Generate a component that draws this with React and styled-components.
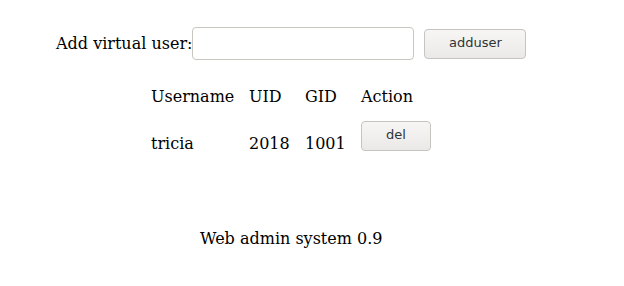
import React from "react";
import styled, { createGlobalStyle } from "styled-components";

const Global = createGlobalStyle`
  html, body { margin: 0; padding: 0; background: #fff; }
  body { font-family: "DejaVu Serif", serif; font-size: 16px; color: #000; }
`;

const Page = styled.div`
  width: 624px;
  height: 286px;
  display: flex;
  flex-direction: column;
`;

const AddRow = styled.div`
  display: flex;
  align-items: center;
  padding: 27px 0 0 56px;
  height: 33px;
`;

const Label = styled.span`
  font-size: 16px;
`;

const TextInput = styled.input`
  box-sizing: border-box;
  width: 222px;
  height: 33px;
  margin: 0 10px 0 0;
  border: 1px solid #c9c6c2;
  border-radius: 4px;
  background: #fff;
  outline: none;
`;

const Button = styled.button`
  box-sizing: border-box;
  width: ${(p) => p.$w}px;
  height: 30px;
  border: 1px solid #c7c4bf;
  border-radius: 4px;
  background: linear-gradient(#f7f6f5, #ebe9e7);
  color: #2e3436;
  font-family: "DejaVu Sans", sans-serif;
  font-size: 13px;
  padding: 0 0 2px;
`;

const Table = styled.div`
  display: grid;
  grid-template-columns: 98px 56px 56px 80px;
  grid-auto-rows: 47px;
  align-items: center;
  margin: 13px 0 0 151px;
`;

const Cell = styled.div`
  display: flex;
  align-items: center;
  margin-top: ${(p) => p.$lift || 0}px;
`;

const Footer = styled.div`
  margin: 62px 0 0 200px;
  font-size: 16px;
`;

export default function App() {
  return (
    <Page>
      <Global />
      <AddRow>
        <Label>Add virtual user:</Label>
        <TextInput type="text" />
        <Button $w={102}>adduser</Button>
      </AddRow>
      <Table>
        <Cell>Username</Cell>
        <Cell>UID</Cell>
        <Cell>GID</Cell>
        <Cell>Action</Cell>
        <Cell>tricia</Cell>
        <Cell>2018</Cell>
        <Cell>1001</Cell>
        <Cell $lift={-16}>
          <Button $w={70}>del</Button>
        </Cell>
      </Table>
      <Footer>Web admin system 0.9</Footer>
    </Page>
  );
}
